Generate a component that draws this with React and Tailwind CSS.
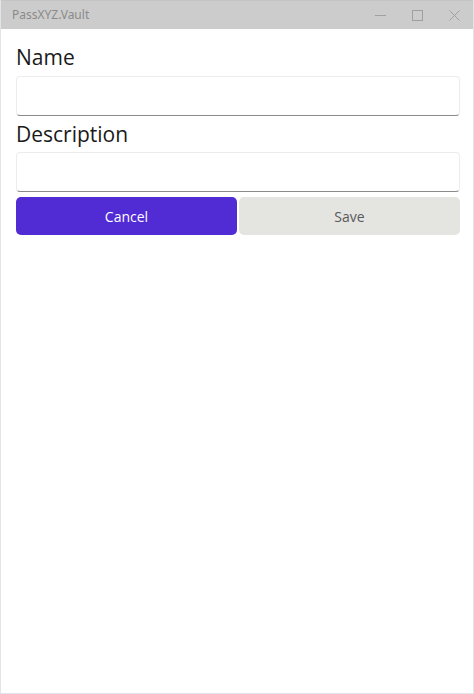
export default function App() {
  return (
    <div className="w-[474px] h-[694px] bg-white flex flex-col border-x border-b border-[#e1e4e8] font-['Open_Sans',sans-serif]">
      <div className="h-[29px] bg-[#cccccc] border-t border-[#c4c4c4] flex items-center justify-between pl-[11px] shrink-0">
        <span className="text-[12px] text-[#8a8a8a] font-['Noto_Sans',sans-serif]">PassXYZ.Vault</span>
        <div className="flex items-center h-full text-[#9a9a9a]">
          <div className="w-[37px] h-full flex items-center justify-center">
            <svg width="11" height="11" viewBox="0 0 11 11">
              <line x1="0" y1="5.5" x2="11" y2="5.5" stroke="#a0a0a0" strokeWidth="1" />
            </svg>
          </div>
          <div className="w-[37px] h-full flex items-center justify-center">
            <svg width="11" height="11" viewBox="0 0 11 11">
              <rect x="0.5" y="0.5" width="10" height="10" fill="none" stroke="#a0a0a0" strokeWidth="1" />
            </svg>
          </div>
          <div className="w-[37px] h-full flex items-center justify-center">
            <svg width="11" height="11" viewBox="0 0 11 11">
              <path d="M0.5 0.5 L10.5 10.5 M10.5 0.5 L0.5 10.5" stroke="#a0a0a0" strokeWidth="1" />
            </svg>
          </div>
        </div>
      </div>

      <div className="flex flex-col pl-[15px] pr-[13px] pt-[13px]">
        <label className="text-[21px] leading-[30px] text-[#1a1a1a]">Name</label>
        <input className="mt-[4px] h-[40px] w-full bg-white border border-[#ececec] border-b-[#8a8a8a] rounded-[4px] px-2 outline-none" />
        <label className="mt-[3px] text-[21px] leading-[30px] text-[#1a1a1a]">Description</label>
        <input className="mt-[3px] h-[40px] w-full bg-white border border-[#ececec] border-b-[#8a8a8a] rounded-[4px] px-2 outline-none" />
        <div className="mt-[5px] grid grid-cols-2 gap-[2px]">
          <button className="h-[38px] rounded-[5px] bg-[#512bd4] text-white text-[14px]">Cancel</button>
          <button className="h-[38px] rounded-[5px] bg-[#e4e4e1] text-[#5a5a5a] text-[14px]">Save</button>
        </div>
      </div>
    </div>
  );
}
